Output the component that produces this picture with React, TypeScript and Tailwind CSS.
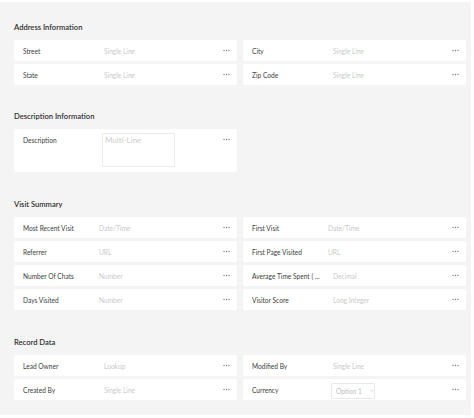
import React from 'react';

type Field = {
    label: string;
    kind: string;
    wide?: boolean;
    select?: boolean;
};

const FONT = { fontFamily: 'Lato, "Open Sans", Arial, sans-serif' };

function Dots() {
    return (
        <svg width="7" height="3" viewBox="0 0 7 3" className="shrink-0">
            <circle cx="1" cy="1.5" r="0.7" fill="#7a7a7a" />
            <circle cx="3.5" cy="1.5" r="0.7" fill="#7a7a7a" />
            <circle cx="6" cy="1.5" r="0.7" fill="#7a7a7a" />
        </svg>
    );
}

function FieldRow({ field }: { field: Field }) {
    return (
        <div className="h-[21px] bg-white rounded-[2px] flex items-center pl-[9px] pr-[7px]">
            <div className="w-[68px] whitespace-nowrap overflow-hidden text-[6.6px] leading-[10px] text-[#3d3d3d] mt-[1px]">
                {field.label}
            </div>
            <div className="flex-1 flex items-center pl-[8px]">
                {field.select ? (
                    <div className="ml-[3px] w-[44px] h-[16px] border border-[#e8e8e8] rounded-[1px] flex items-center pl-[4px] gap-[8px] whitespace-nowrap text-[6.6px] leading-[10px] text-[#bdbdbd] mt-[2px]">
                        <span>Option 1</span>
                        <svg width="5" height="3" viewBox="0 0 5 3">
                            <path d="M0.5 0.5 L2.5 2.5 L4.5 0.5" stroke="#b5b5b5" strokeWidth="0.7" fill="none" />
                        </svg>
                    </div>
                ) : (
                    <div
                        className={
                            'whitespace-nowrap text-[6.6px] leading-[10px] text-[#c9c9c9] mt-[1px] ' +
                            (field.wide ? 'pl-[5px]' : '')
                        }
                    >
                        {field.kind}
                    </div>
                )}
            </div>
            <Dots />
        </div>
    );
}

function SectionTitle({ children }: { children: React.ReactNode }) {
    return (
        <div className="h-[16px] flex items-center mb-[5px] pt-[1px] text-[7.6px] font-semibold text-[#2f2f2f]">
            {children}
        </div>
    );
}

function Grid({ fields }: { fields: Field[] }) {
    return (
        <div className="grid grid-cols-2 gap-x-[6px] gap-y-[3px]">
            {fields.map((f) => (
                <FieldRow key={f.label} field={f} />
            ))}
        </div>
    );
}

const address: Field[] = [
    { label: 'Street', kind: 'Single Line', wide: true },
    { label: 'City', kind: 'Single Line', wide: true },
    { label: 'State', kind: 'Single Line', wide: true },
    { label: 'Zip Code', kind: 'Single Line', wide: true },
];

const visits: Field[] = [
    { label: 'Most Recent Visit', kind: 'Date/Time' },
    { label: 'First Visit', kind: 'Date/Time' },
    { label: 'Referrer', kind: 'URL' },
    { label: 'First Page Visited', kind: 'URL' },
    { label: 'Number Of Chats', kind: 'Number' },
    { label: 'Average Time Spent ( ...', kind: 'Decimal', wide: true },
    { label: 'Days Visited', kind: 'Number' },
    { label: 'Visitor Score', kind: 'Long Integer', wide: true },
];

const record: Field[] = [
    { label: 'Lead Owner', kind: 'Lookup', wide: true },
    { label: 'Modified By', kind: 'Single Line', wide: true },
    { label: 'Created By', kind: 'Single Line', wide: true },
    { label: 'Currency', kind: 'Option 1', select: true },
];

export default function App() {
    return (
        <div className="min-h-screen bg-white" style={FONT}>
            <div className="mt-[2px] mr-[3px] bg-[#f4f4f4] pt-[17px] pb-[15px] pl-[14px] pr-[5px]">
                <SectionTitle>Address Information</SectionTitle>
                <Grid fields={address} />

                <div className="mt-[23px]">
                    <SectionTitle>Description Information</SectionTitle>
                    <div className="grid grid-cols-2 gap-x-[6px]">
                        <div className="h-[43px] bg-white rounded-[2px] flex items-start pl-[9px] pr-[7px] pt-[4px]">
                            <div className="w-[68px] pt-[2px] text-[6.6px] leading-[10px] text-[#3d3d3d]">Description</div>
                            <div className="flex-1 pl-[11px]">
                                <div className="w-[73px] h-[34px] border border-[#ececec] px-[2px] pt-[1px] text-[8px] leading-[10px] text-[#cdcdcd]">
                                    Multi-Line
                                </div>
                            </div>
                            <div className="pt-[5px]">
                                <Dots />
                            </div>
                        </div>
                    </div>
                </div>

                <div className="mt-[24px]">
                    <SectionTitle>Visit Summary</SectionTitle>
                    <Grid fields={visits} />
                </div>

                <div className="mt-[24px]">
                    <SectionTitle>Record Data</SectionTitle>
                    <Grid fields={record} />
                </div>
            </div>
        </div>
    );
}
